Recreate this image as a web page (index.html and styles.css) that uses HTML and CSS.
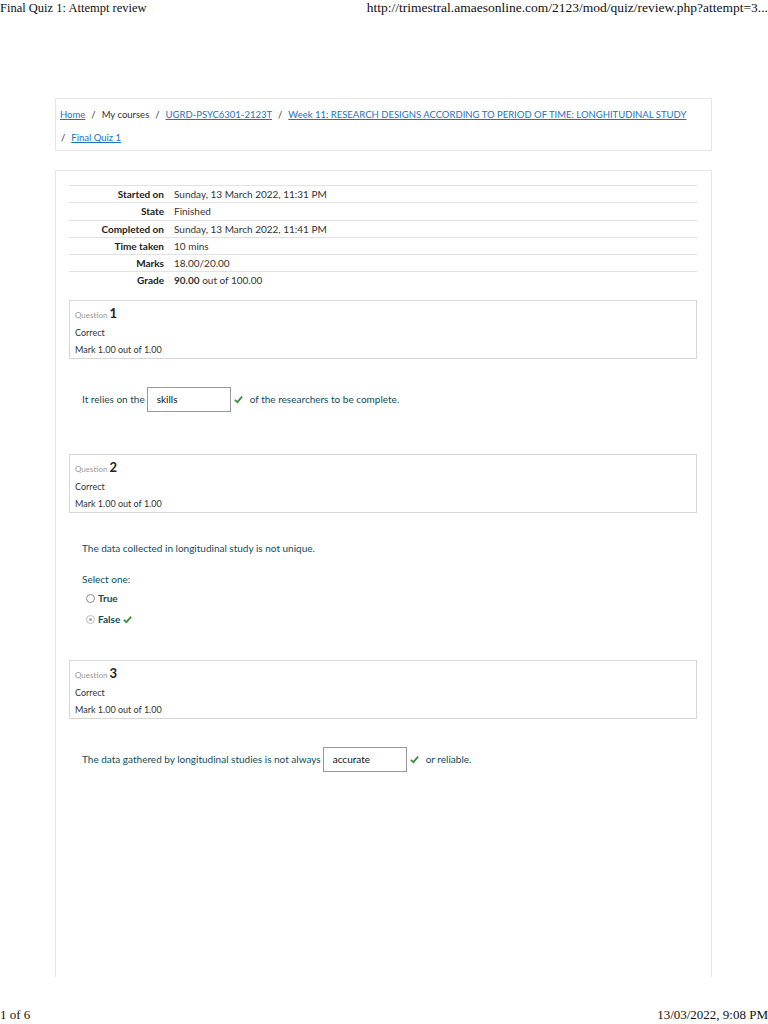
FILE: index.html
```html
<!DOCTYPE html>
<html>
<head>
  <title>Final Quiz 1: Attempt review</title>
  <link rel="stylesheet" href="styles.css">
</head>
<body>
  <div class="print-head">
    <span class="doc-title">Final Quiz 1: Attempt review</span>
    <span class="doc-url">http://trimestral.amaesonline.com/2123/mod/quiz/review.php?attempt=3...</span>
  </div>

  <div class="page">
    <div class="breadcrumb">
      <div class="crumbs">
        <a href="#">Home</a>
        <span class="sep">/</span>
        <span>My courses</span>
        <span class="sep">/</span>
        <a href="#">UGRD-PSYC6301-2123T</a>
        <span class="sep">/</span>
        <a href="#">Week 11: RESEARCH DESIGNS ACCORDING TO PERIOD OF TIME: LONGHITUDINAL STUDY</a>
      </div>
      <div class="crumbs">
        <span class="sep">/</span>
        <a href="#">Final Quiz 1</a>
      </div>
    </div>

    <div class="main-box">
      <table class="summary">
        <tr><th>Started on</th><td>Sunday, 13 March 2022, 11:31 PM</td></tr>
        <tr><th>State</th><td>Finished</td></tr>
        <tr><th>Completed on</th><td>Sunday, 13 March 2022, 11:41 PM</td></tr>
        <tr><th>Time taken</th><td>10 mins</td></tr>
        <tr><th>Marks</th><td>18.00/20.00</td></tr>
        <tr><th>Grade</th><td><b>90.00</b> out of 100.00</td></tr>
      </table>

      <div class="que">
        <div class="info">
          <div class="qno">Question <b>1</b></div>
          <div>Correct</div>
          <div>Mark 1.00 out of 1.00</div>
        </div>
        <div class="formulation">
          <span>It relies on the</span><span class="answer">skills</span><svg class="tick" viewBox="0 0 10 10"><path d="M1 5.5 L3.8 8 L9 1.8" fill="none" stroke="#3e8e3e" stroke-width="2"/></svg><span>of the researchers to be complete.</span>
        </div>
      </div>

      <div class="que">
        <div class="info">
          <div class="qno">Question <b>2</b></div>
          <div>Correct</div>
          <div>Mark 1.00 out of 1.00</div>
        </div>
        <div class="formulation tf">
          <p>The data collected in longitudinal study is not unique.</p>
          <p class="prompt">Select one:</p>
          <div class="option"><span class="radio"></span>True</div>
          <div class="option"><span class="radio checked"></span>False<svg class="tick" viewBox="0 0 10 10"><path d="M1 5.5 L3.8 8 L9 1.8" fill="none" stroke="#3e8e3e" stroke-width="2"/></svg></div>
        </div>
      </div>

      <div class="que">
        <div class="info">
          <div class="qno">Question <b>3</b></div>
          <div>Correct</div>
          <div>Mark 1.00 out of 1.00</div>
        </div>
        <div class="formulation">
          <span>The data gathered by longitudinal studies is not always</span><span class="answer">accurate</span><svg class="tick" viewBox="0 0 10 10"><path d="M1 5.5 L3.8 8 L9 1.8" fill="none" stroke="#3e8e3e" stroke-width="2"/></svg><span>or reliable.</span>
        </div>
      </div>
    </div>
  </div>

  <div class="print-foot">
    <span>1 of 6</span>
    <span>13/03/2022, 9:08 PM</span>
  </div>
</body>
</html>
```

FILE: styles.css
```css
body {
  margin: 0;
  height: 1024px;
  display: flex;
  flex-direction: column;
  background: #fff;
  font-family: Lato, "Open Sans", sans-serif;
  font-size: 10px;
  color: #333;
}

.print-head, .print-foot {
  display: flex;
  justify-content: space-between;
  font-family: "Liberation Serif", serif;
  font-size: 13px;
  color: #111;
  line-height: 16px;
}

.doc-title {
  font-size: 12.5px;
}

.doc-url {
  font-size: 13.5px;
}

.print-foot {
  margin-top: auto;
  padding-bottom: 1px;
}

.page {
  padding: 82px 56px 0 55px;
}

a {
  color: #1a74c4;
}

.breadcrumb {
  border: 1px solid #e6e6e6;
  padding: 4px 4px 1px;
  font-size: 9.5px;
  color: #333;
}

.crumbs {
  display: flex;
  align-items: center;
  height: 23px;
}

.crumbs .sep {
  margin: 0 6px;
}

.crumbs .sep:first-child {
  margin-left: 1px;
}

.main-box {
  box-sizing: border-box;
  margin-top: 19px;
  border: 1px solid #e6e6e6;
  border-bottom: none;
  height: 807px;
  padding: 14px 14px 0 13px;
}

.summary {
  width: 100%;
  border-collapse: collapse;
}

.summary th, .summary td {
  border-top: 1px solid #e2e2e2;
  padding: 0 5px;
  line-height: 16.3px;
}

.summary th {
  width: 90px;
  text-align: right;
  color: #222;
}

.summary td {
  text-align: left;
  color: #333;
}

.que {
  margin-top: 11px;
}

.info {
  border: 1px solid #d6d6d6;
  padding: 4px 5px 0;
  line-height: 17px;
  font-size: 9px;
  color: #333;
}

.qno {
  color: #999;
  font-size: 8px;
}

.qno b {
  color: #222;
  font-size: 13px;
}

.formulation {
  color: #0f4d5b;
  padding: 28px 13px 31px;
  display: flex;
  align-items: center;
}

.answer {
  box-sizing: border-box;
  width: 84px;
  height: 25px;
  line-height: 23px;
  border: 1px solid #999;
  padding: 0 4px 0 9px;
  color: #111;
  margin-left: 2px;
}

.tick {
  width: 9px;
  height: 9px;
  margin: 0 7px 0 3px;
}

.tf {
  display: block;
  padding: 28px 13px 19px;
}

.tf p {
  margin: 0;
  line-height: 14px;
}

.tf .prompt {
  margin-top: 17px;
  margin-bottom: 2px;
}

.option {
  display: flex;
  align-items: center;
  line-height: 21px;
  padding-left: 4px;
  font-weight: bold;
}

.option .tick {
  margin: 0 0 0 3px;
}

.radio {
  width: 7px;
  height: 7px;
  border: 1px solid #888;
  border-radius: 50%;
  margin-right: 3px;
  position: relative;
}

.radio.checked {
  border-color: #bbb;
}

.radio.checked::after {
  content: "";
  position: absolute;
  left: 2px;
  top: 2px;
  width: 3px;
  height: 3px;
  border-radius: 50%;
  background: #aaa;
}
```
